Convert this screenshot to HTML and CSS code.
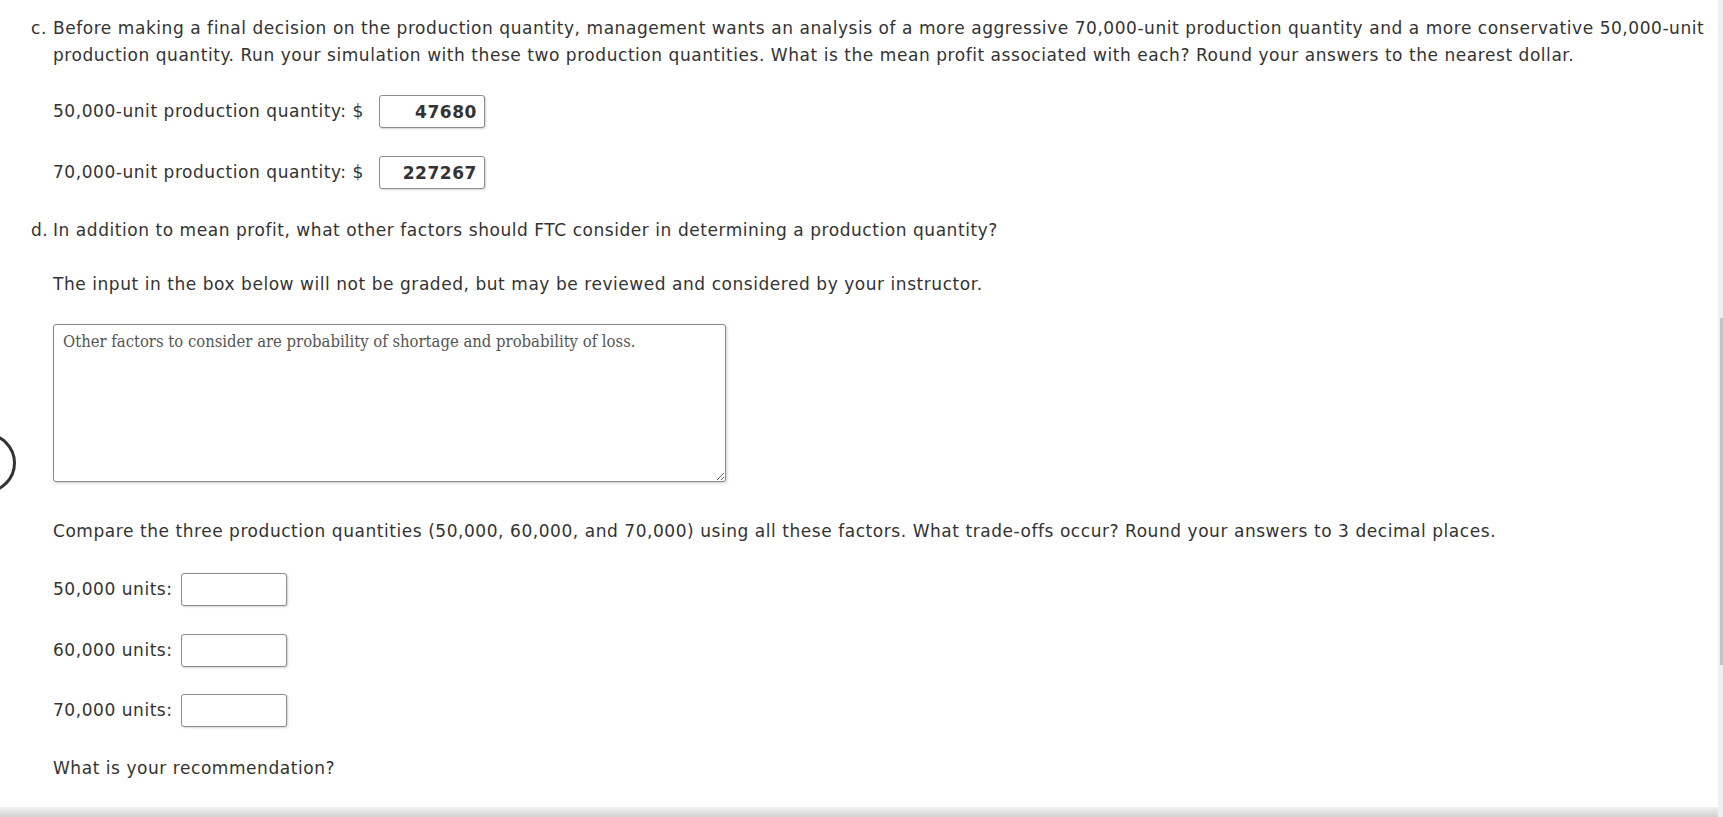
FILE: index.html
```html
<!DOCTYPE html>
<html lang="en">
<head>
<meta charset="utf-8">
<title>Production quantity analysis</title>
<link rel="stylesheet" href="styles.css">
</head>
<body>
<div class="frame">
  <main class="page">
    <section class="part">
      <div class="question">
        <span class="letter">c.</span>
        <p>Before making a final decision on the production quantity, management wants an analysis of a more aggressive 70,000-unit production quantity and a more conservative 50,000-unit production quantity. Run your simulation with these two production quantities. What is the mean profit associated with each? Round your answers to the nearest dollar.</p>
      </div>
      <div class="body">
        <div class="row">
          <span class="label">50,000-unit production quantity: $</span>
          <input class="answer filled" type="text" value="47680">
        </div>
        <div class="row">
          <span class="label">70,000-unit production quantity: $</span>
          <input class="answer filled" type="text" value="227267">
        </div>
      </div>
    </section>

    <section class="part part-d">
      <div class="question">
        <span class="letter">d.</span>
        <p>In addition to mean profit, what other factors should FTC consider in determining a production quantity?</p>
      </div>
      <div class="body">
        <p class="note">The input in the box below will not be graded, but may be reviewed and considered by your instructor.</p>
        <textarea class="essay">Other factors to consider are probability of shortage and probability of loss.</textarea>
        <p class="compare">Compare the three production quantities (50,000, 60,000, and 70,000) using all these factors. What trade-offs occur? Round your answers to 3 decimal places.</p>
        <div class="row tight">
          <span class="label">50,000 units:</span>
          <input class="answer" type="text">
        </div>
        <div class="row tight">
          <span class="label">60,000 units:</span>
          <input class="answer" type="text">
        </div>
        <div class="row tight">
          <span class="label">70,000 units:</span>
          <input class="answer" type="text">
        </div>
        <p class="recommend">What is your recommendation?</p>
      </div>
    </section>
    <span class="side-button" aria-hidden="true"></span>
  </main>
  <div class="scrollbar"><span class="thumb"></span></div>
  <div class="hbar"></div>
</div>
</body>
</html>
```

FILE: styles.css
```css
html, body {
  margin: 0;
  padding: 0;
  height: 100%;
  background: #ffffff;
}

body {
  font-family: "DejaVu Sans", Verdana, sans-serif;
  font-size: 17px;
  letter-spacing: 0.55px;
  color: #333333;
  overflow: hidden;
}

.frame {
  height: 817px;
  display: grid;
  grid-template-columns: 1fr 5px;
  grid-template-rows: 1fr 10px;
}

.page {
  position: relative;
  padding: 15px 0 0 31px;
  overflow: hidden;
}

.question {
  display: grid;
  grid-template-columns: 22px 1fr;
  line-height: 27px;
}

.question p {
  margin: 0;
}

.body {
  padding-left: 22px;
}

.part .body {
  padding-top: 26px;
}

.part-d .body {
  padding-top: 27px;
}

.row {
  display: flex;
  align-items: center;
  gap: 15px;
  margin-bottom: 28px;
  line-height: 27px;
}

.row.tight {
  gap: 8px;
  margin-bottom: 27.5px;
}

.answer {
  box-sizing: border-box;
  width: 106px;
  height: 33px;
  border: 1px solid #8c8c8c;
  border-radius: 3px;
  box-shadow: 1px 1px 2px rgba(0, 0, 0, 0.18);
  background: #ffffff;
  font-family: "DejaVu Sans", Verdana, sans-serif;
  font-size: 17px;
  letter-spacing: 0.55px;
  color: #333333;
  padding: 0 7px;
  text-align: right;
  outline: none;
}

.answer.filled {
  font-weight: bold;
}

.part-d {
  margin-top: 1px;
}

.note,
.compare,
.recommend {
  margin: 0;
  line-height: 27px;
}

.essay {
  display: block;
  box-sizing: border-box;
  width: 673px;
  height: 158px;
  margin: 26px 0 36px;
  padding: 6px 9px;
  border: 1px solid #8c8c8c;
  border-radius: 3px;
  box-shadow: 1px 1px 3px rgba(0, 0, 0, 0.2);
  font-family: "DejaVu Serif", "Liberation Serif", serif;
  font-stretch: condensed;
  font-size: 16.5px;
  letter-spacing: 0;
  line-height: 21px;
  color: #555555;
  resize: both;
  outline: none;
}

.compare {
  margin-bottom: 28px;
}

.recommend {
  margin-top: 1px;
}

.side-button {
  position: absolute;
  left: -44px;
  top: 433px;
  width: 54px;
  height: 54px;
  border: 3px solid #333333;
  border-radius: 50%;
}

.scrollbar {
  grid-column: 2;
  grid-row: 1 / 3;
  background: #efefef;
  display: flex;
  justify-content: flex-end;
  padding-top: 318px;
}

.thumb {
  display: block;
  width: 3px;
  height: 347px;
  background: #c4c4c4;
}

.hbar {
  grid-column: 1;
  grid-row: 2;
  background: linear-gradient(to bottom, #f2f2f2, #d0d0d0);
}
```
